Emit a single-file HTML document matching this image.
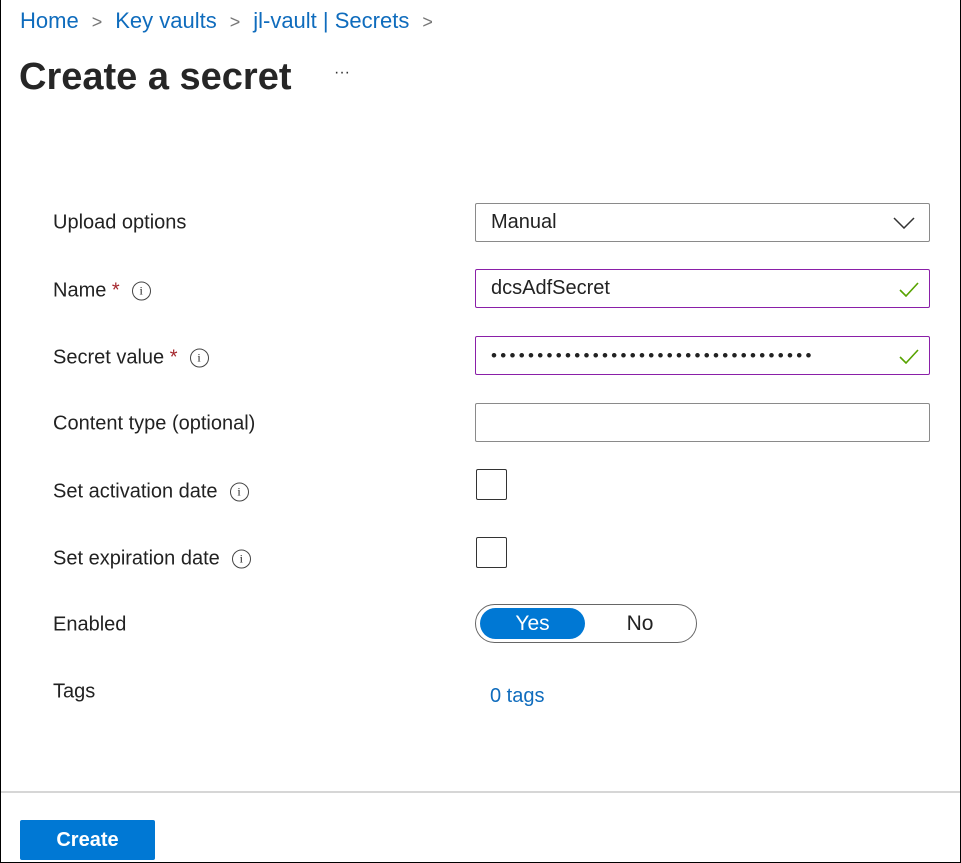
<!DOCTYPE html>
<html><head><style>
*{margin:0;padding:0;box-sizing:border-box}
body{width:961px;height:863px;background:#fff;font-family:"Liberation Sans",sans-serif;color:#222;position:relative;overflow:hidden}
.frame{position:absolute;left:0;top:0;width:961px;height:863px;border:1px solid #000;border-top:none}
.a{position:absolute;white-space:nowrap}
.lbl{font-size:20px;color:#222;transform:translateY(-50%)}
.req{color:#a4262c}
.info{display:inline-block;width:19px;height:19px;border:1px solid #444;border-radius:50%;font-size:12px;text-align:center;line-height:17px;vertical-align:2px;margin-left:12px;font-family:"Liberation Serif",serif}
.inp{position:absolute;left:475px;width:455px;height:39px;border:1px solid #8a8a8a;border-radius:2px;font-size:20px;padding-left:15px;line-height:37px}
.inp.pur{border:1.5px solid #8a1fa8}
.chk{position:absolute;left:476px;width:31px;height:31px;border:1px solid #333;border-radius:2px}
.bc{color:#0f6cbd;font-size:22px}
.sep{color:#777;font-size:18px;margin:0 13px}
</style></head><body>
<div class="frame"></div>
<div class="a bc" style="left:20px;top:8px">Home<span class="sep">&gt;</span>Key vaults<span class="sep">&gt;</span>jl-vault | Secrets<span class="sep">&gt;</span></div>
<div class="a" style="left:19px;top:56px;font-size:38px;font-weight:bold;color:#262626">Create a secret</div>
<div class="a" style="left:334px;top:64px;font-size:16px;color:#333">···</div>

<div class="a lbl" style="left:53px;top:223px">Upload options</div>
<div class="a lbl" style="left:53px;top:291px">Name <span class="req">*</span><span class="info">i</span></div>
<div class="a lbl" style="left:53px;top:358px">Secret value <span class="req">*</span><span class="info">i</span></div>
<div class="a lbl" style="left:53px;top:424px">Content type (optional)</div>
<div class="a lbl" style="left:53px;top:492px">Set activation date<span class="info">i</span></div>
<div class="a lbl" style="left:53px;top:559px">Set expiration date<span class="info">i</span></div>
<div class="a lbl" style="left:53px;top:625px">Enabled</div>
<div class="a lbl" style="left:53px;top:692px">Tags</div>

<div class="inp" style="top:203px">Manual
<svg style="position:absolute;right:14px;top:13px" width="22" height="12"><path d="M1 1L11 11L21 1" fill="none" stroke="#333" stroke-width="1.5"/></svg></div>
<div class="inp pur" style="top:269px;border-color:#8a1fa8">dcsAdfSecret
<svg style="position:absolute;right:10px;top:12px" width="20" height="15"><path d="M1 8L7 14L19 1" fill="none" stroke="#57a300" stroke-width="1.6"/></svg></div>
<div class="inp pur" style="top:336px;letter-spacing:3.3px;font-size:17px">•••••••••••••••••••••••••••••••••••
<svg style="position:absolute;right:10px;top:12px" width="20" height="15"><path d="M1 8L7 14L19 1" fill="none" stroke="#57a300" stroke-width="1.6"/></svg></div>
<div class="inp" style="top:403px"></div>
<div class="chk" style="top:469px"></div>
<div class="chk" style="top:537px"></div>

<div class="a" style="left:475px;top:604px;width:222px;height:39px;border:1px solid #666;border-radius:20px"></div>
<div class="a" style="left:480px;top:608px;width:105px;height:31px;background:#0078d4;border-radius:16px;color:#fff;font-size:21px;text-align:center;line-height:31px">Yes</div>
<div class="a" style="left:585px;top:608px;width:110px;height:31px;font-size:21px;text-align:center;line-height:31px">No</div>
<div class="a" style="left:490px;top:685px;font-size:20px;color:#0f6cbd">0 tags</div>

<div class="a" style="left:1px;top:791px;width:959px;height:2px;background:#d6d6d6"></div>
<div class="a" style="left:20px;top:820px;width:135px;height:40px;background:#0078d4;border-radius:2px;color:#fff;font-weight:bold;font-size:20px;text-align:center;line-height:40px">Create</div>
</body></html>
